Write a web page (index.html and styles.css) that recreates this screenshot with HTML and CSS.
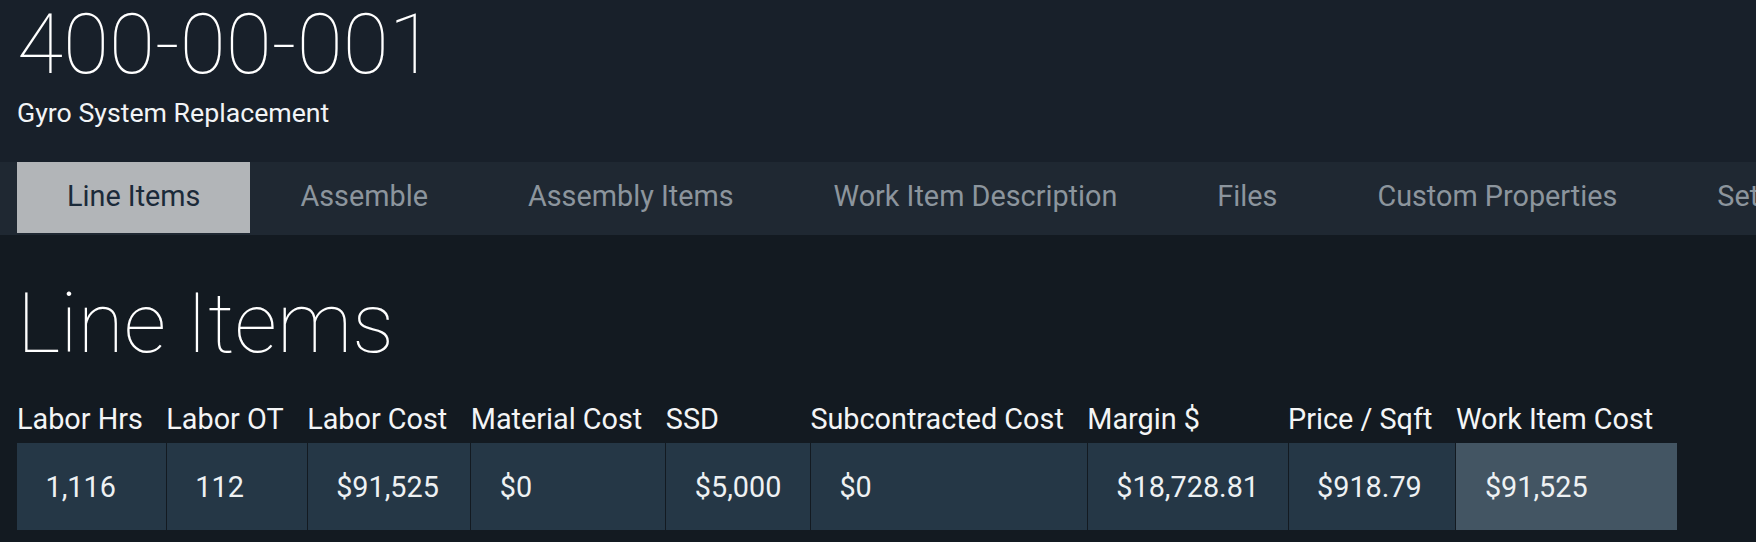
FILE: index.html
```html
<!DOCTYPE html>
<html lang="en">
<head>
    <meta charset="UTF-8">
    <meta name="viewport" content="width=device-width, initial-scale=1.0">
    <title>400-00-001 - Line Items</title>
    <link rel="stylesheet" href="styles.css">
</head>
<body>
    <div class="page-header">
        <h1 class="item-number">400-00-001</h1>
        <div class="item-name">Gyro System Replacement</div>
    </div>

    <div class="tabs">
        <span class="tab active-tab">Line Items</span>
        <span class="tab">Assemble</span>
        <span class="tab">Assembly Items</span>
        <span class="tab">Work Item Description</span>
        <span class="tab">Files</span>
        <span class="tab">Custom Properties</span>
        <span class="tab">Settings</span>
    </div>

    <div class="content">
        <h2>Line Items</h2>

        <table class="summary">
            <thead>
                <tr>
                    <th>Labor Hrs</th>
                    <th>Labor OT</th>
                    <th>Labor Cost</th>
                    <th>Material Cost</th>
                    <th>SSD</th>
                    <th>Subcontracted Cost</th>
                    <th>Margin $</th>
                    <th>Price / Sqft</th>
                    <th>Work Item Cost</th>
                </tr>
            </thead>
            <tbody>
                <tr>
                    <td>1,116</td>
                    <td>112</td>
                    <td>$91,525</td>
                    <td>$0</td>
                    <td>$5,000</td>
                    <td>$0</td>
                    <td>$18,728.81</td>
                    <td>$918.79</td>
                    <td class="total">$91,525</td>
                </tr>
            </tbody>
        </table>
    </div>
</body>
</html>
```

FILE: styles.css
```css
body {
    margin: 0;
    font-family: Roboto, "Liberation Sans", sans-serif;
    background-color: #131a21;
    color: #f0f2f4;
    overflow: hidden;
}
.page-header {
    background-color: #18202a;
    padding: 3px 17px 35px;
}
.item-number {
    margin: 0;
    font-size: 84px;
    font-weight: 100;
    line-height: 84px;
    color: #ffffff;
}
.item-name {
    margin-top: 12px;
    font-size: 26.7px;
    line-height: 28px;
    color: #f2f4f6;
}
.tabs {
    display: flex;
    background-color: #1f2832;
    padding: 0 0 2px 17px;
    white-space: nowrap;
    overflow: hidden;
}
.tab {
    flex-shrink: 0;
    padding: 0 50px 3px;
    line-height: 68px;
    font-size: 28.8px;
    color: #8c959d;
}
.active-tab {
    background-color: #b2b5b8;
    color: #1b2a39;
}
.content {
    padding: 0 17px;
}
.content h2 {
    margin: 39px 0 29px;
    font-size: 84px;
    font-weight: 100;
    color: #ffffff;
}
.summary {
    border-collapse: collapse;
    font-size: 28.8px;
}
.summary th {
    padding: 0 23.5px 7px 0;
    text-align: left;
    font-weight: 400;
    color: #f4f5f6;
    white-space: nowrap;
}
.summary td {
    height: 87px;
    padding: 0 28.5px;
    background-color: #253746;
    color: #eef1f3;
    white-space: nowrap;
}
.summary td + td {
    border-left: 1px solid #131a21;
}
.summary td.total {
    background-color: #435563;
}
```
